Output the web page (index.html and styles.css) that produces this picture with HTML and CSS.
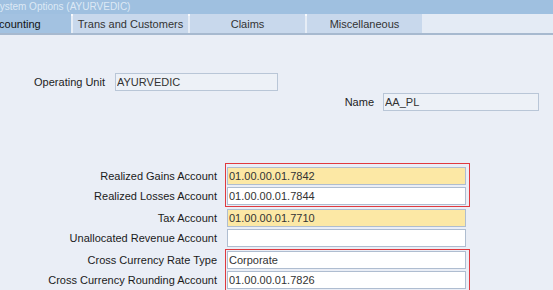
FILE: index.html
```html
<!DOCTYPE html>
<html lang="en">
<head>
    <meta charset="UTF-8">
    <title>System Options (AYURVEDIC)</title>
    <link rel="stylesheet" href="styles.css">
</head>
<body>
    <div class="title-bar"><span>System Options (AYURVEDIC)</span></div>

    <div class="tabs">
        <div class="tab active">Accounting</div>
        <div class="tab-sep"></div>
        <div class="tab">Trans and Customers</div>
        <div class="tab-sep"></div>
        <div class="tab">Claims</div>
        <div class="tab-sep"></div>
        <div class="tab">Miscellaneous</div>
        <div class="tab-rest"></div>
    </div>

    <div class="content">
        <div class="top-row unit-row">
            <label>Operating Unit</label>
            <input type="text" class="readonly unit" value="AYURVEDIC" readonly>
        </div>
        <div class="top-row name-row">
            <label>Name</label>
            <input type="text" class="readonly name" value="AA_PL" readonly>
        </div>

        <div class="accounts">
            <div class="group first">
                <div class="labels">
                    <div class="lbl">Realized Gains Account</div>
                    <div class="lbl">Realized Losses Account</div>
                </div>
                <div class="fields boxed">
                    <div class="cell"><input type="text" class="required" value="01.00.00.01.7842"></div>
                    <div class="cell"><input type="text" value="01.00.00.01.7844"></div>
                </div>
            </div>
            <div class="group">
                <div class="labels">
                    <div class="lbl">Tax Account</div>
                    <div class="lbl">Unallocated Revenue Account</div>
                </div>
                <div class="fields">
                    <div class="cell"><input type="text" class="required" value="01.00.00.01.7710"></div>
                    <div class="cell"><input type="text" value=""></div>
                </div>
            </div>
            <div class="group">
                <div class="labels">
                    <div class="lbl">Cross Currency Rate Type</div>
                    <div class="lbl">Cross Currency Rounding Account</div>
                </div>
                <div class="fields boxed">
                    <div class="cell"><input type="text" value="Corporate"></div>
                    <div class="cell"><input type="text" value="01.00.00.01.7826"></div>
                </div>
            </div>
        </div>
    </div>
</body>
</html>
```

FILE: styles.css
```css
body {
    margin: 0;
    background-color: #eaeef6;
    font-family: "Liberation Sans", Arial, sans-serif;
    font-size: 11px;
    color: #1a1a1a;
    overflow: hidden;
}

/* window title, clipped on the left like the screenshot */
.title-bar {
    height: 14px;
    background-color: #9fc0e0;
    overflow: hidden;
    white-space: nowrap;
}

.title-bar span {
    display: inline-block;
    margin-left: -7px;
    font-size: 10px;
    line-height: 14px;
    color: #dde9f5;
}

.tabs {
    display: flex;
    height: 19px;
    background-color: #9fc0e0;
    border-bottom: 2px solid #a7b9cf;
}

.tab {
    flex: none;
    width: 115px;
    background-color: #c8d8ec;
    color: #333;
    text-align: center;
    line-height: 20px;
    white-space: nowrap;
}

.tab.active {
    margin-left: -44px;
    background-color: #a3c2e1;
    color: #111;
}

.tab-sep {
    flex: none;
    width: 2px;
    background-color: #e6edf6;
    border-top: 2px solid #f7f9fc;
}

.tab-rest {
    flex: 1;
    background-color: #e4ebf5;
}

.content {
    padding-top: 38px;
}

.top-row {
    display: flex;
    align-items: center;
    height: 18px;
}

.top-row label {
    text-align: right;
    color: #222;
}

.unit-row label {
    width: 105px;
    margin-right: 10px;
}

.name-row {
    margin-top: 2px;
}

.name-row label {
    width: 374px;
    margin-right: 9px;
}

input {
    box-sizing: border-box;
    height: 18px;
    margin: 0;
    padding: 0 1px;
    border: 1px solid #afbdd0;
    border-radius: 0;
    background-color: #ffffff;
    font-family: "Liberation Sans", Arial, sans-serif;
    font-size: 11px;
    color: #333;
    outline: none;
}

input.readonly {
    background-color: #edf1f7;
    border-color: #b9c6d7;
}

input.unit {
    width: 163px;
}

input.name {
    width: 156px;
}

input.required {
    background-color: #fce8a5;
}

.accounts {
    margin-top: 52px;
}

.group {
    display: flex;
}

.labels {
    width: 217px;
    margin-right: 8px;
    padding: 1px 0;
}

.first .labels {
    padding-top: 3px;
}

.fields {
    box-sizing: border-box;
    width: 245px;
    padding: 1px 2px;
}

.first .fields {
    padding-top: 3px;
}

/* red highlight round the grouped fields */
.fields.boxed {
    box-shadow: inset 0 0 0 1px #e0393e;
}

.lbl, .cell {
    height: 20px;
    display: flex;
    align-items: center;
}

.lbl {
    justify-content: flex-end;
}

.cell input {
    width: 239px;
}
```
